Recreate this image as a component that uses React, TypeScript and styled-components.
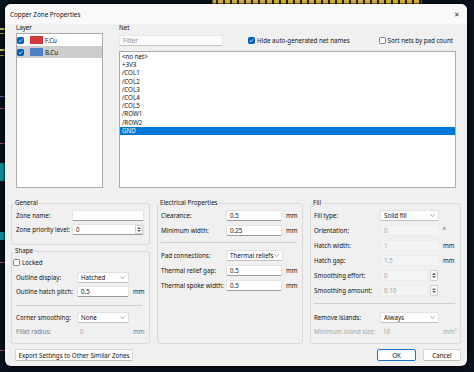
import React from "react";
import styled, { createGlobalStyle } from "styled-components";

const GlobalStyle = createGlobalStyle`
  html, body { margin: 0; padding: 0; }
  body {
    background: #07111f;
    font-family: "Noto Sans", "Open Sans", sans-serif;
    color: #111111;
  }
  * { box-sizing: border-box; }
`;

const Screen = styled.div`
  position: relative;
  width: 474px;
  height: 372px;
  overflow: hidden;
  background: #08121f;
  padding: 4px 0 0 5px;
`;

// pcb canvas behind the dialog
const Canvas = styled.div`
  position: absolute;
  inset: 0;
`;
const Trace = styled.div<{ $c: string }>`
  position: absolute;
  background: ${(p) => p.$c};
`;
const Connector = styled.div`
  position: absolute;
  left: 212px;
  top: 0;
  width: 210px;
  height: 5px;
  background: repeating-linear-gradient(
    90deg,
    #d9b441 0px,
    #d9b441 3px,
    #2a2410 3px,
    #2a2410 5px,
    #d9b441 5px,
    #d9b441 7px
  );
  border: 1px solid #6b5a20;
  border-top: none;
`;

const Dialog = styled.div`
  position: relative;
  width: 462px;
  height: 362px;
  background: #f0f0f0;
  border-radius: 6px;
  box-shadow: 0 0 0 1px rgba(0, 0, 0, 0.45), 0 3px 10px rgba(0, 0, 0, 0.55);
  display: flex;
  flex-direction: column;
  overflow: hidden;
  font-size: 6.2px;
`;

const TitleBar = styled.div`
  height: 20px;
  flex: none;
  display: flex;
  align-items: center;
  justify-content: space-between;
  padding: 0 7px 0 5px;
  background: #f9f9f9;
  font-size: 6.3px;
`;
const Close = styled.span`
  font-size: 7px;
  color: #333;
`;

const Body = styled.div`
  flex: 1;
  display: flex;
  flex-direction: column;
  padding: 0 6px;
`;

const TopSection = styled.div`
  display: grid;
  grid-template-columns: 87px 337px;
  column-gap: 16px;
  padding: 0 5px;
`;
const Column = styled.div`
  display: flex;
  flex-direction: column;
`;
const SectionLabel = styled.div`
  height: 8px;
  line-height: 8px;
`;

const ListBox = styled.div<{ $h: number; $mt: number }>`
  height: ${(p) => p.$h}px;
  margin-top: ${(p) => p.$mt}px;
  background: #ffffff;
  border: 1px solid #ababab;
  overflow: hidden;
`;

const LayerRow = styled.div<{ $selected?: boolean }>`
  height: 12px;
  display: flex;
  align-items: center;
  background: ${(p) => (p.$selected ? "#cdcdcd" : "transparent")};
`;
const Swatch = styled.span<{ $c: string }>`
  width: 13px;
  height: 8px;
  margin: 0 2px 0 6px;
  background: ${(p) => p.$c};
`;

const Box = styled.span<{ $checked?: boolean }>`
  flex: none;
  width: 7px;
  height: 7px;
  border-radius: 1.5px;
  display: inline-flex;
  align-items: center;
  justify-content: center;
  background: ${(p) => (p.$checked ? "#005fb8" : "#ffffff")};
  border: 1px solid ${(p) => (p.$checked ? "#005fb8" : "#7a7a7a")};
`;

function CheckBox({ checked }: { checked?: boolean }) {
  return (
    <Box $checked={checked}>
      {checked && (
        <svg width="5" height="5" viewBox="0 0 10 10">
          <polyline
            points="1.5,5.2 4,7.6 8.6,2.4"
            fill="none"
            stroke="#fff"
            strokeWidth="1.6"
          />
        </svg>
      )}
    </Box>
  );
}

const FilterRow = styled.div`
  margin-top: 3px;
  height: 11px;
  display: flex;
  align-items: center;
  padding-right: 3px;
`;
const FilterInput = styled.div`
  width: 104px;
  height: 11px;
  line-height: 10px;
  padding-left: 3px;
  background: #fbfbfb;
  border: 1px solid #e6e6e6;
  border-bottom-color: #c4c4c4;
  color: #8d8d8d;
`;
const Check = styled.label<{ $ml?: string }>`
  display: flex;
  align-items: center;
  gap: 2px;
  margin-left: ${(p) => p.$ml || "0"};
  white-space: nowrap;
`;

const NetItem = styled.div<{ $selected?: boolean }>`
  height: 8.2px;
  line-height: 8.2px;
  padding-left: 2px;
  background: ${(p) => (p.$selected ? "#0078d7" : "transparent")};
  color: ${(p) => (p.$selected ? "#ffffff" : "#111111")};
`;

const BottomSection = styled.div`
  margin-top: 11px;
  display: grid;
  grid-template-columns: 139px 146px 151px;
  column-gap: 7px;
  align-items: start;
`;
const Stack = styled.div`
  display: flex;
  flex-direction: column;
  gap: 2px;
`;

const Group = styled.fieldset<{ $h: number; $pad: number }>`
  margin: 0;
  min-width: 0;
  height: ${(p) => p.$h}px;
  padding: 0 ${(p) => p.$pad}px;
  border: 1px solid #d9d9d9;
  border-radius: 3px;
  display: flex;
  flex-direction: column;
`;
const Legend = styled.legend`
  padding: 0 1px;
  margin-left: -2px;
  line-height: 8px;
  height: 8px;
`;

const Row = styled.div<{ $label: number; $ctrl: number; $mt: number }>`
  margin-top: ${(p) => p.$mt}px;
  height: 11px;
  display: grid;
  grid-template-columns: ${(p) => p.$label}px ${(p) => p.$ctrl}px auto;
  column-gap: 4px;
  align-items: center;
  white-space: nowrap;
`;
const tone = { normal: "#111111", muted: "#7a7a7a", disabled: "#a6a6a6" };
type Tone = keyof typeof tone;
const Label = styled.span<{ $tone?: Tone }>`
  color: ${(p) => tone[p.$tone || "normal"]};
`;
const Unit = styled.span<{ $tone?: Tone }>`
  color: ${(p) => tone[p.$tone || "normal"]};
`;

const Input = styled.div<{ $disabled?: boolean }>`
  height: 11px;
  line-height: 10px;
  padding-left: 3px;
  display: flex;
  align-items: center;
  justify-content: space-between;
  background: ${(p) => (p.$disabled ? "#f4f4f4" : "#ffffff")};
  border: 1px solid ${(p) => (p.$disabled ? "#ececec" : "#e3e3e3")};
  border-bottom-color: ${(p) => (p.$disabled ? "#ececec" : "#9a9a9a")};
  border-radius: 1.5px;
  color: ${(p) => (p.$disabled ? "#a3a3a3" : "#111111")};
`;
const Bare = styled.div`
  height: 11px;
  line-height: 11px;
  padding-left: 3px;
  color: #a3a3a3;
`;
const SplitCtrl = styled.div`
  display: flex;
  gap: 2px;
  height: 11px;
`;
const Spin = styled.div<{ $inset?: boolean }>`
  flex: none;
  width: 8px;
  height: ${(p) => (p.$inset ? "9px" : "11px")};
  margin-right: ${(p) => (p.$inset ? "0" : "1px")};
  display: flex;
  flex-direction: column;
  align-items: center;
  justify-content: space-evenly;
  background: #fbfbfb;
  border: 1px solid #cfcfcf;
  border-radius: 1px;
`;

function SpinArrows({ inset }: { inset?: boolean }) {
  return (
    <Spin $inset={inset}>
      <svg width="4" height="2" viewBox="0 0 4 2">
        <polygon points="0,2 2,0 4,2" fill="#606060" />
      </svg>
      <svg width="4" height="2" viewBox="0 0 4 2">
        <polygon points="0,0 4,0 2,2" fill="#606060" />
      </svg>
    </Spin>
  );
}

const Select = styled.div`
  height: 11px;
  padding: 0 3px 0 3px;
  display: flex;
  align-items: center;
  justify-content: space-between;
  background: #fdfdfd;
  border: 1px solid #e1e1e1;
  border-bottom-color: #c2c2c2;
  border-radius: 1.5px;
  white-space: nowrap;
`;

function Dropdown({ value }: { value: string }) {
  return (
    <Select>
      <span>{value}</span>
      <svg width="5" height="3" viewBox="0 0 10 6">
        <polyline points="1,1 5,5 9,1" fill="none" stroke="#6a6a6a" strokeWidth="1.2" />
      </svg>
    </Select>
  );
}

const Separator = styled.div<{ $mt: number; $mr: number }>`
  margin-top: ${(p) => p.$mt}px;
  margin-right: ${(p) => p.$mr}px;
  height: 1px;
  background: #cfcfcf;
  flex: none;
`;

const LockedRow = styled.div`
  margin: 3px 0 0 -3px;
  height: 8px;
  display: flex;
  align-items: center;
  gap: 2px;
`;

const Footer = styled.div`
  margin-top: 5px;
  height: 12px;
  display: flex;
  align-items: center;
  gap: 7px;
  padding-left: 4px;
`;
const Button = styled.button<{ $w: number; $primary?: boolean }>`
  width: ${(p) => p.$w}px;
  height: 12px;
  padding: 0;
  font: inherit;
  font-size: 6.2px;
  color: #111111;
  background: #fdfdfd;
  border: 1px solid ${(p) => (p.$primary ? "#1a73c9" : "#d3d3d3")};
  border-bottom-color: ${(p) => (p.$primary ? "#1a73c9" : "#bdbdbd")};
  border-radius: 2px;
  &:first-child {
    margin-right: auto;
  }
`;

const nets = ["<no net>", "+3V3", "/COL1", "/COL2", "/COL3", "/COL4", "/COL5", "/ROW1", "/ROW2", "GND"];

const traces = [
  { t: 28, l: 0, w: 6, h: 2, c: "#c9c35a" },
  { t: 33, l: 0, w: 4, h: 1, c: "#9b9a55" },
  { t: 49, l: 0, w: 6, h: 2, c: "#c9c35a" },
  { t: 55, l: 0, w: 4, h: 1, c: "#9b9a55" },
  { t: 96, l: 0, w: 5, h: 1, c: "#4c77b8" },
  { t: 108, l: 0, w: 5, h: 1, c: "#b24a78" },
  { t: 143, l: 0, w: 5, h: 1, c: "#b24a78" },
  { t: 163, l: 0, w: 5, h: 18, c: "#1597a8" },
  { t: 232, l: 0, w: 5, h: 8, c: "#1597a8" },
  { t: 262, l: 0, w: 5, h: 1, c: "#b24a78" },
  { t: 350, l: 0, w: 5, h: 1, c: "#b24a78" },
];

export default function App() {
  return (
    <Screen>
      <GlobalStyle />
      <Canvas>
        <Connector />
        {traces.map((t, i) => (
          <Trace key={i} $c={t.c} style={{ top: t.t, left: t.l, width: t.w, height: t.h }} />
        ))}
      </Canvas>
      <Dialog>
        <TitleBar>
          <span>Copper Zone Properties</span>
          <Close>✕</Close>
        </TitleBar>
        <Body>
          <TopSection>
            <Column>
              <SectionLabel>Layer</SectionLabel>
              <ListBox $h={155} $mt={1}>
                <LayerRow>
                  <CheckBox checked />
                  <Swatch $c="#d23a3a" />
                  F.Cu
                </LayerRow>
                <LayerRow $selected>
                  <CheckBox checked />
                  <Swatch $c="#4f80c6" />
                  B.Cu
                </LayerRow>
              </ListBox>
            </Column>
            <Column>
              <SectionLabel>Net</SectionLabel>
              <FilterRow>
                <FilterInput>Filter</FilterInput>
                <Check $ml="25px">
                  <CheckBox checked />
                  Hide auto-generated net names
                </Check>
                <Check $ml="auto">
                  <CheckBox />
                  Sort nets by pad count
                </Check>
              </FilterRow>
              <ListBox $h={137} $mt={5}>
                <div style={{ height: 1 }} />
                {nets.map((n) => (
                  <NetItem key={n} $selected={n === "GND"}>
                    {n}
                  </NetItem>
                ))}
              </ListBox>
            </Column>
          </TopSection>

          <BottomSection>
            <Stack>
              <Group $h={46} $pad={4}>
                <Legend>General</Legend>
                <Row $label={52} $ctrl={72} $mt={3}>
                  <Label>Zone name:</Label>
                  <Input />
                </Row>
                <Row $label={52} $ctrl={72} $mt={3}>
                  <Label>Zone priority level:</Label>
                  <Input>
                    <span>0</span>
                    <SpinArrows inset />
                  </Input>
                </Row>
              </Group>
              <Group $h={97} $pad={4}>
                <Legend>Shape</Legend>
                <LockedRow>
                  <CheckBox />
                  Locked
                </LockedRow>
                <Row $label={57} $ctrl={52} $mt={6}>
                  <Label>Outline display:</Label>
                  <Dropdown value="Hatched" />
                </Row>
                <Row $label={57} $ctrl={52} $mt={3}>
                  <Label>Outline hatch pitch:</Label>
                  <Input>0.5</Input>
                  <Unit>mm</Unit>
                </Row>
                <Separator $mt={8} $mr={3} />
                <Row $label={57} $ctrl={52} $mt={6}>
                  <Label>Corner smoothing:</Label>
                  <Dropdown value="None" />
                </Row>
                <Row $label={57} $ctrl={52} $mt={3}>
                  <Label $tone="muted">Fillet radius:</Label>
                  <Bare>0</Bare>
                  <Unit $tone="muted">mm</Unit>
                </Row>
              </Group>
            </Stack>

            <Group $h={145} $pad={3}>
              <Legend>Electrical Properties</Legend>
              <Row $label={61} $ctrl={56} $mt={3}>
                <Label>Clearance:</Label>
                <Input>0.5</Input>
                <Unit>mm</Unit>
              </Row>
              <Row $label={61} $ctrl={56} $mt={4}>
                <Label>Minimum width:</Label>
                <Input>0.25</Input>
                <Unit>mm</Unit>
              </Row>
              <Separator $mt={6} $mr={2} />
              <Row $label={61} $ctrl={57} $mt={7}>
                <Label>Pad connections:</Label>
                <Dropdown value="Thermal reliefs" />
              </Row>
              <Row $label={61} $ctrl={56} $mt={4}>
                <Label>Thermal relief gap:</Label>
                <Input>0.5</Input>
                <Unit>mm</Unit>
              </Row>
              <Row $label={61} $ctrl={56} $mt={4}>
                <Label>Thermal spoke width:</Label>
                <Input>0.5</Input>
                <Unit>mm</Unit>
              </Row>
            </Group>

            <Group $h={145} $pad={3}>
              <Legend>Fill</Legend>
              <Row $label={62} $ctrl={59} $mt={3}>
                <Label>Fill type:</Label>
                <Dropdown value="Solid fill" />
              </Row>
              <Row $label={62} $ctrl={59} $mt={4}>
                <Label>Orientation:</Label>
                <Input $disabled>0</Input>
                <Unit>°</Unit>
              </Row>
              <Row $label={62} $ctrl={59} $mt={4}>
                <Label>Hatch width:</Label>
                <Input $disabled>1</Input>
                <Unit>mm</Unit>
              </Row>
              <Row $label={62} $ctrl={59} $mt={4}>
                <Label>Hatch gap:</Label>
                <Input $disabled>1.5</Input>
                <Unit>mm</Unit>
              </Row>
              <Row $label={62} $ctrl={59} $mt={4}>
                <Label>Smoothing effort:</Label>
                <SplitCtrl>
                  <Input $disabled style={{ flex: 1 }}>0</Input>
                  <SpinArrows />
                </SplitCtrl>
              </Row>
              <Row $label={62} $ctrl={59} $mt={4}>
                <Label>Smoothing amount:</Label>
                <SplitCtrl>
                  <Input $disabled style={{ flex: 1 }}>0.10</Input>
                  <SpinArrows />
                </SplitCtrl>
              </Row>
              <Separator $mt={7} $mr={2} />
              <Row $label={62} $ctrl={59} $mt={8}>
                <Label>Remove islands:</Label>
                <Dropdown value="Always" />
              </Row>
              <Row $label={62} $ctrl={59} $mt={3}>
                <Label $tone="disabled">Minimum island size:</Label>
                <Bare>10</Bare>
                <Unit $tone="disabled">
                  mm<sup style={{ fontSize: 4 }}>2</sup>
                </Unit>
              </Row>
            </Group>
          </BottomSection>

          <Footer>
            <Button $w={118}>Export Settings to Other Similar Zones</Button>
            <Button $w={39} $primary>
              OK
            </Button>
            <Button $w={38}>Cancel</Button>
          </Footer>
        </Body>
      </Dialog>
    </Screen>
  );
}
